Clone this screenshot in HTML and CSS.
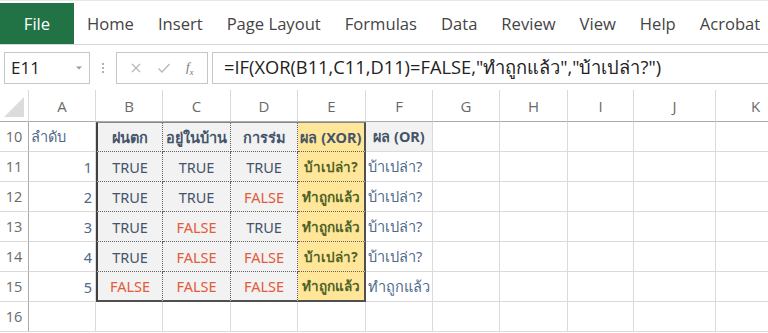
FILE: index.html
```html
<!DOCTYPE html>
<html>
<head>
<meta charset="utf-8">
<link rel="stylesheet" href="styles.css">
</head>
<body>
<div class="ribbon">
  <div class="tab file">File</div>
  <div class="tab">Home</div>
  <div class="tab">Insert</div>
  <div class="tab">Page Layout</div>
  <div class="tab">Formulas</div>
  <div class="tab">Data</div>
  <div class="tab">Review</div>
  <div class="tab">View</div>
  <div class="tab">Help</div>
  <div class="tab">Acrobat</div>
</div>
<div class="fbar">
  <div class="namebox"><span>E11</span><svg class="dd" width="8" height="6" viewBox="0 0 8 6"><path d="M1 1.5 L4 4.5 L7 1.5 Z" fill="#9a9a9a"/></svg></div>
  <div class="vdots"><i></i><i></i><i></i></div>
  <div class="btns">
    <svg width="12" height="12" viewBox="0 0 12 12"><path d="M2 2 L10 10 M10 2 L2 10" stroke="#b8b8b8" stroke-width="1.3"/></svg>
    <svg width="14" height="12" viewBox="0 0 14 12"><path d="M1.5 6.5 L5 10 L12.5 2" stroke="#b8b8b8" stroke-width="1.3" fill="none"/></svg>
    <span class="fx">f<sub>x</sub></span>
  </div>
  <div class="formula">=IF(XOR(B11,C11,D11)=FALSE,"ทำถูกแล้ว","บ้าเปล่า?")</div>
</div>
<div class="sheet">
  <div class="ch corner"><svg width="24" height="24" viewBox="0 0 24 24"><path d="M22 2 L22 22 L2 22 Z" fill="#dcdcdc"/></svg></div>
  <div class="ch">A</div><div class="ch">B</div><div class="ch">C</div><div class="ch">D</div><div class="ch">E</div><div class="ch">F</div><div class="ch">G</div><div class="ch">H</div><div class="ch">I</div><div class="ch">J</div><div class="ch">K</div>

  <div class="rh">10</div>
  <div class="c a-txt">ลำดับ</div>
  <div class="c t hd lft top">ฝนตก</div>
  <div class="c t hd top">อยู่ในบ้าน</div>
  <div class="c t hd top">การร่ม</div>
  <div class="c t y hd top rgt">ผล (XOR)</div>
  <div class="c f10 hd">ผล (OR)</div>
  <div class="c"></div><div class="c"></div><div class="c"></div><div class="c"></div><div class="c"></div>

  <div class="rh">11</div>
  <div class="c num">1</div>
  <div class="c t lft tr">TRUE</div>
  <div class="c t tr">TRUE</div>
  <div class="c t tr">TRUE</div>
  <div class="c t y rgt">บ้าเปล่า?</div>
  <div class="c fo">บ้าเปล่า?</div>
  <div class="c"></div><div class="c"></div><div class="c"></div><div class="c"></div><div class="c"></div>

  <div class="rh">12</div>
  <div class="c num">2</div>
  <div class="c t lft tr">TRUE</div>
  <div class="c t tr">TRUE</div>
  <div class="c t fl">FALSE</div>
  <div class="c t y rgt">ทำถูกแล้ว</div>
  <div class="c fo">บ้าเปล่า?</div>
  <div class="c"></div><div class="c"></div><div class="c"></div><div class="c"></div><div class="c"></div>

  <div class="rh">13</div>
  <div class="c num">3</div>
  <div class="c t lft tr">TRUE</div>
  <div class="c t fl">FALSE</div>
  <div class="c t tr">TRUE</div>
  <div class="c t y rgt">ทำถูกแล้ว</div>
  <div class="c fo">บ้าเปล่า?</div>
  <div class="c"></div><div class="c"></div><div class="c"></div><div class="c"></div><div class="c"></div>

  <div class="rh">14</div>
  <div class="c num">4</div>
  <div class="c t lft tr">TRUE</div>
  <div class="c t fl">FALSE</div>
  <div class="c t fl">FALSE</div>
  <div class="c t y rgt">บ้าเปล่า?</div>
  <div class="c fo">บ้าเปล่า?</div>
  <div class="c"></div><div class="c"></div><div class="c"></div><div class="c"></div><div class="c"></div>

  <div class="rh">15</div>
  <div class="c num">5</div>
  <div class="c t lft bot fl">FALSE</div>
  <div class="c t bot fl">FALSE</div>
  <div class="c t bot fl">FALSE</div>
  <div class="c t y rgt bot">ทำถูกแล้ว</div>
  <div class="c fo">ทำถูกแล้ว</div>
  <div class="c"></div><div class="c"></div><div class="c"></div><div class="c"></div><div class="c"></div>

  <div class="rh">16</div>
  <div class="c"></div><div class="c"></div><div class="c"></div><div class="c"></div><div class="c"></div><div class="c"></div>
  <div class="c"></div><div class="c"></div><div class="c"></div><div class="c"></div><div class="c"></div>
</div>
</body>
</html>
```
FILE: styles.css
```css
* { box-sizing: border-box; }
html, body { margin: 0; padding: 0; background: #fff; overflow: hidden; }
body { width: 768px; height: 333px; font-family: "Noto Sans", "Open Sans", sans-serif; }

.ribbon {
  height: 45px;
  display: flex;
  align-items: stretch;
  padding-top: 2px;
  border-top: 1px solid #e8e8e8;
  border-bottom: 1px solid #d8d8d8;
  background: #fff;
  white-space: nowrap;
  overflow: hidden;
}
.tab {
  flex-shrink: 0;
  font-family: "Open Sans", "Noto Sans", sans-serif;
  font-size: 16.6px;
  color: #444;
  display: flex;
  align-items: center;
  padding: 0 12px;
}
.tab.file {
  background: #217346;
  color: #fff;
  width: 74px;
  justify-content: center;
  padding: 0;
  margin-right: 1px;
}

.fbar {
  height: 45px;
  display: flex;
  align-items: center;
  padding: 0 0 0 4px;
  background: #fff;
}
.namebox {
  flex-shrink: 0;
  width: 86px;
  height: 32px;
  border: 1px solid #c6c6c6;
  display: flex;
  align-items: center;
  justify-content: space-between;
  padding: 0 6px 0 6px;
  font-family: "Open Sans", sans-serif;
  font-size: 17px;
  color: #222;
}
.vdots {
  flex-shrink: 0;
  width: 26px;
  display: flex;
  flex-direction: column;
  align-items: center;
  gap: 2px;
}
.vdots i { width: 2px; height: 2px; background: #b0b0b0; display: block; }
.btns {
  flex-shrink: 0;
  width: 92px;
  height: 32px;
  border: 1px solid #c6c6c6;
  display: flex;
  align-items: center;
  justify-content: space-around;
  padding: 0 6px 0 6px;
}
.fx {
  font-family: "Liberation Serif", serif;
  font-style: italic;
  font-size: 13px;
  color: #777;
}
.fx sub { font-size: 9px; }
.formula {
  flex: 1;
  height: 32px;
  margin-left: 4px;
  border: 1px solid #c6c6c6;
  border-right: none;
  display: flex;
  align-items: center;
  padding-left: 11px;
  font-family: "Open Sans", "Noto Sans", sans-serif;
  font-size: 18.3px;
  color: #222;
  white-space: nowrap;
  overflow: hidden;
}

.sheet {
  display: grid;
  grid-template-columns: 29px 67px 67px 68px 67px 68px 67px 67px 68px 66px 82px 80px;
  grid-template-rows: 32px repeat(7, 30px);
  font-size: 14.5px;
}
.ch {
  border-right: 1px solid #dadada;
  border-bottom: 1px solid #ababab;
  color: #6a6a6a;
  font-family: "Open Sans", sans-serif;
  font-size: 15px;
  display: flex;
  align-items: center;
  justify-content: center;
}
.corner { align-items: flex-end; justify-content: flex-end; padding: 0 2px 2px 0; }
.rh {
  border-right: 1px solid #ababab;
  border-bottom: 1px solid #dadada;
  color: #6a6a6a;
  font-family: "Open Sans", sans-serif;
  font-size: 14.5px;
  display: flex;
  align-items: center;
  justify-content: center;
}
.c {
  border-right: 1px solid #dadada;
  border-bottom: 1px solid #dadada;
  display: flex;
  align-items: center;
  justify-content: center;
  white-space: nowrap;
  overflow: hidden;
}
.a-txt { justify-content: flex-start; padding-left: 2px; color: #4d6a8a; }
.num { justify-content: flex-end; padding-right: 3px; color: #4d6a8a; }
.t {
  background: #f2f2f2;
  border-right: 1px dotted #606060;
  border-bottom: 1px dotted #606060;
}
.t.y { background: #ffe699; color: #4f6228; font-weight: bold; font-size: 13.5px; }
.hd { font-weight: bold; color: #44546a; }
.t.y.hd { color: #44546a; font-size: 14.5px; }
.lft { border-left: 2px solid #404040; }
.rgt { border-right: 2px solid #505050; }
.bot { border-bottom: 2px solid #505050; }
.top { border-top: 1px solid #888; }
.tr { color: #44546a; }
.fl { color: #e35b3a; }
.f10 { background: #f2f2f2; }
.fo { justify-content: flex-start; padding-left: 2px; color: #4d6a8a; }
```
